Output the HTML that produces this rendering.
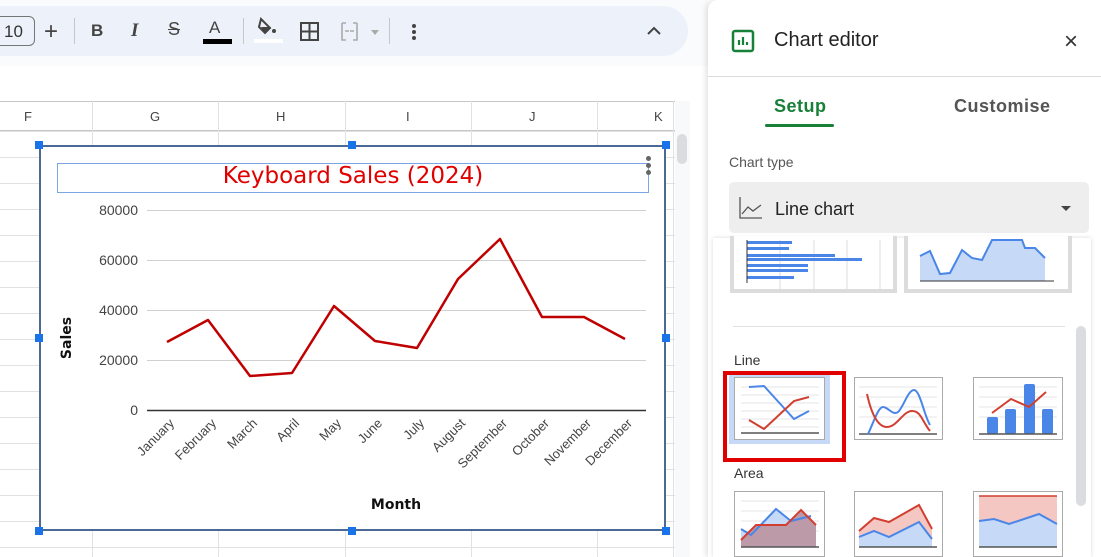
<!DOCTYPE html>
<html><head><meta charset="utf-8"><style>
*{margin:0;padding:0;box-sizing:border-box}
body{width:1101px;height:557px;overflow:hidden;background:#fff;font-family:"Liberation Sans",sans-serif;position:relative}
.a{position:absolute}
</style></head><body>
<div class="a" style="left:0;top:0;width:708px;height:66px;background:#f9fbfd"></div>
<div class="a" style="left:-30px;top:6px;width:718px;height:50px;background:#edf2fa;border-radius:25px"></div>
<div class="a" style="left:-10px;top:16px;width:45px;height:30px;border:1px solid #747775;border-radius:6px;font-size:17px;color:#333;padding:5px 0 0 13px">10</div>
<div class="a" style="left:44px;top:18px;font-size:24px;color:#444">+</div>
<div class="a" style="left:74px;top:18px;width:1px;height:26px;background:#c7c7c7"></div>
<div class="a" style="left:91px;top:21px;font-size:17px;font-weight:bold;color:#444">B</div>
<div class="a" style="left:131px;top:20px;font-size:19px;font-style:italic;font-family:'Liberation Serif',serif;font-weight:bold;color:#444">I</div>
<div class="a" style="left:168px;top:19px;font-size:18px;color:#444;text-decoration:line-through">S</div>
<div class="a" style="left:209px;top:18px;font-size:17px;color:#444">A</div>
<div class="a" style="left:203px;top:39px;width:29px;height:5px;background:#000"></div>
<div class="a" style="left:243px;top:18px;width:1px;height:26px;background:#c7c7c7"></div>
<svg class="a" style="left:256px;top:16px" width="22" height="22" viewBox="0 0 22 22"><path d="M5 3l9 9-5 5-6-6z" fill="none" stroke="#444" stroke-width="2"/><path d="M5 11h10l-6 6z" fill="#444"/><circle cx="18" cy="15" r="2" fill="#444"/></svg>
<div class="a" style="left:254px;top:39px;width:29px;height:4px;background:#fff"></div>
<svg class="a" style="left:300px;top:22px" width="20" height="20"><rect x="1" y="1" width="17" height="17" fill="none" stroke="#444" stroke-width="2"/><path d="M9.5 1v17M1 9.5h17" stroke="#444" stroke-width="2"/></svg>
<svg class="a" style="left:340px;top:22px" width="40" height="20"><path d="M2 1h4M2 1v17h4M17 1h-4M17 1v17h-4M5 9h4M14 9h-4" stroke="#aaa" stroke-width="1.6" fill="none"/><path d="M31 8l4 5 4-5z" fill="#aaa"/></svg>
<div class="a" style="left:389px;top:18px;width:1px;height:26px;background:#c7c7c7"></div>
<div class="a" style="left:412px;top:24px;width:4px;height:4px;background:#444;border-radius:50%;box-shadow:0 6px 0 #444,0 12px 0 #444"></div>
<svg class="a" style="left:646px;top:25px" width="16" height="12"><path d="M2 9l6-6 6 6" fill="none" stroke="#444" stroke-width="2"/></svg>
<div class="a" style="left:0;top:66px;width:690px;height:36px;background:#fff"></div>
<div class="a" style="left:0;top:101px;width:675px;height:456px;
background-image:linear-gradient(#e1e1e1 1px,transparent 1px);background-size:100% 26px;background-position:0 4px"></div>
<div class="a" style="left:0;top:101px;width:675px;height:30px;background:#fff;border-top:1px solid #c4c7c5;border-bottom:1px solid #c4c7c5"></div>
<div class="a" style="left:92px;top:101px;width:1px;height:456px;background:#e1e1e1"></div>
<div class="a" style="left:218px;top:101px;width:1px;height:456px;background:#e1e1e1"></div>
<div class="a" style="left:345px;top:101px;width:1px;height:456px;background:#e1e1e1"></div>
<div class="a" style="left:471px;top:101px;width:1px;height:456px;background:#e1e1e1"></div>
<div class="a" style="left:597px;top:101px;width:1px;height:456px;background:#e1e1e1"></div>
<div class="a" style="left:673px;top:101px;width:1px;height:456px;background:#e1e1e1"></div>
<div class="a" style="left:24px;top:109px;font-size:13px;color:#444">F</div>
<div class="a" style="left:150px;top:109px;font-size:13px;color:#444">G</div>
<div class="a" style="left:276px;top:109px;font-size:13px;color:#444">H</div>
<div class="a" style="left:406px;top:109px;font-size:13px;color:#444">I</div>
<div class="a" style="left:529px;top:109px;font-size:13px;color:#444">J</div>
<div class="a" style="left:654px;top:109px;font-size:13px;color:#444">K</div>
<div class="a" style="left:675px;top:101px;width:15px;height:456px;background:#f8f9fa"></div>
<div class="a" style="left:677px;top:134px;width:10px;height:30px;background:#dadce0;border-radius:5px"></div>
<div class="a" style="left:39px;top:145px;width:627px;height:386px;background:#fff;border:2px solid #4a6a94"></div>
<div class="a" style="left:57px;top:163px;width:592px;height:30px;border:1.5px solid #7aa6e6"></div>
<div class="a" style="left:57px;top:161px;width:592px;text-align:center;font-family:'Comic Sans MS','DejaVu Sans',sans-serif;font-size:23px;color:#e00000;line-height:30px">Keyboard Sales (2024)</div>
<div class="a" style="left:646px;top:156px;width:5px;height:5px;background:#666;border-radius:50%;box-shadow:0 7px 0 #666,0 14px 0 #666"></div>
<svg class="a" style="left:0;top:0" width="700" height="557">
<g stroke="#d0d0d0" stroke-width="1"><path d="M147 210.5H646M147 260.5H646M147 310.5H646M147 360.5H646"/></g>
<path d="M147 410.5H646" stroke="#333" stroke-width="1.5"/>
<g font-family="Liberation Sans" font-size="14" fill="#444" text-anchor="end">
<text x="138" y="215">80000</text><text x="138" y="265">60000</text><text x="138" y="315">40000</text><text x="138" y="365">20000</text><text x="138" y="415">0</text></g>
<polyline fill="none" stroke="#c00000" stroke-width="2.5" stroke-linejoin="round" points="167,342 208,320 250,376 292,373 334,306 375,341 417,348 458,279 500,239 542,317 584,317 625,339"/>
<g font-family="Liberation Sans" font-size="13" fill="#444" text-anchor="end">
<text transform="translate(175,424) rotate(-45)">January</text>
<text transform="translate(217,424) rotate(-45)">February</text>
<text transform="translate(258,424) rotate(-45)">March</text>
<text transform="translate(300,424) rotate(-45)">April</text>
<text transform="translate(342,424) rotate(-45)">May</text>
<text transform="translate(383,424) rotate(-45)">June</text>
<text transform="translate(425,424) rotate(-45)">July</text>
<text transform="translate(466,424) rotate(-45)">August</text>
<text transform="translate(508,424) rotate(-45)">September</text>
<text transform="translate(550,424) rotate(-45)">October</text>
<text transform="translate(592,424) rotate(-45)">November</text>
<text transform="translate(633,424) rotate(-45)">December</text></g>
<text x="396" y="509" text-anchor="middle" font-family="Comic Sans MS,DejaVu Sans" font-weight="bold" font-size="14" fill="#111">Month</text>
<text transform="translate(71,338) rotate(-90)" text-anchor="middle" font-family="Comic Sans MS,DejaVu Sans" font-weight="bold" font-size="14" fill="#111">Sales</text>
<g fill="#1a73e8"><rect x="35" y="141" width="8" height="8"/><rect x="348" y="141" width="8" height="8"/><rect x="662" y="141" width="8" height="8"/><rect x="35" y="334" width="8" height="8"/><rect x="662" y="334" width="8" height="8"/><rect x="35" y="527" width="8" height="8"/><rect x="348" y="527" width="8" height="8"/><rect x="662" y="527" width="8" height="8"/></g>
</svg>
<div class="a" style="left:708px;top:0;width:393px;height:557px;background:#fff;box-shadow:-2px 0 6px rgba(0,0,0,.12);border-top-left-radius:10px"></div>
<svg class="a" style="left:731px;top:29px" width="26" height="26"><rect x="2" y="2" width="20" height="20" rx="2" fill="none" stroke="#188038" stroke-width="2.5"/><path d="M8 16v-5M12 16V8M16 16v-3" stroke="#188038" stroke-width="2.2"/></svg>
<div class="a" style="left:774px;top:29px;font-size:20px;color:#222">Chart editor</div>
<div class="a" style="left:1064px;top:28px;font-size:24px;color:#333">×</div>
<div class="a" style="left:708px;top:76px;width:393px;height:1px;background:#dadce0"></div>
<div class="a" style="left:774px;top:96px;font-size:18px;color:#188038;font-weight:600;letter-spacing:.5px">Setup</div>
<div class="a" style="left:765px;top:124px;width:69px;height:3px;background:#188038;border-radius:2px"></div>
<div class="a" style="left:954px;top:96px;font-size:18px;color:#555;font-weight:600;letter-spacing:.5px">Customise</div>
<div class="a" style="left:729px;top:154px;font-size:14px;color:#555">Chart type</div>
<div class="a" style="left:729px;top:182px;width:360px;height:51px;background:#eeeeee;border-radius:5px"></div>
<svg class="a" style="left:739px;top:197px" width="24" height="22"><path d="M1 0v21h22M3 17l6-7 5 4 8-6" fill="none" stroke="#555" stroke-width="1.3"/></svg>
<div class="a" style="left:775px;top:199px;font-size:18px;color:#222">Line chart</div>
<div class="a" style="left:1061px;top:206px;width:0;height:0;border:5px solid transparent;border-top:5px solid #444"></div>
<div class="a" style="left:713px;top:238px;width:378px;height:319px;background:#fff;box-shadow:0 0 4px rgba(0,0,0,.15)"></div>
<div class="a" style="left:730px;top:236px;width:167px;height:57px;border:4px solid #dcdcdc;border-top:none;background:#fff"></div>
<svg class="a" style="left:730px;top:240px" width="167" height="52"><path d="M50 0v52M84 0v52M117 0v52M150 0v52" stroke="#ddd"/><g fill="#4a86e8"><rect x="17" y="1" width="45" height="3"/><rect x="17" y="7" width="42" height="3"/><rect x="17" y="14" width="88" height="3"/><rect x="17" y="18" width="115" height="3"/><rect x="17" y="24" width="61" height="3"/><rect x="17" y="29" width="61" height="3"/><rect x="17" y="36" width="47" height="3"/></g><path d="M17 0v43" stroke="#333"/></svg>
<div class="a" style="left:904px;top:236px;width:168px;height:57px;border:4px solid #dcdcdc;border-top:none;background:#fff"></div>
<svg class="a" style="left:908px;top:236px" width="160" height="53"><path d="M12 20l10-5 10 23 10 -1 12-23 10 8 10 2 10-20 30 0 3 8 10 0 10 10V45H12z" fill="#c6d9f6"/><path d="M12 20l10-5 10 23 10 -1 12-23 10 8 10 2 10-20 30 0 3 8 10 0 10 10" fill="none" stroke="#4a86e8" stroke-width="2"/><path d="M12 45h134" stroke="#333"/></svg>
<div class="a" style="left:733px;top:326px;width:332px;height:1px;background:#e0e0e0"></div>
<div class="a" style="left:1076px;top:326px;width:10px;height:180px;background:#dadce0;border-radius:5px"></div>
<div class="a" style="left:734px;top:352px;font-size:14px;color:#333">Line</div>
<div class="a" style="left:723px;top:371px;width:123px;height:91px;border:4px solid #e00000"></div>
<div class="a" style="left:729px;top:375px;width:101px;height:69px;background:#c6d9f6"></div>
<svg class="a" style="left:734px;top:377px" width="92" height="64"><rect x=".5" y=".5" width="90" height="62" fill="#fff" stroke="#aaa"/><path d="M7 10h78M7 18h78M7 26h78M7 34h78M7 42h78M7 50h78" stroke="#e4e4e4"/><path d="M7 56h78" stroke="#555" stroke-width="1.5"/><path d="M15 10l15-1 30 33 15-8" fill="none" stroke="#4a86e8" stroke-width="2"/><path d="M15 43l15 9 30-28 15-4" fill="none" stroke="#d23f31" stroke-width="2"/></svg>
<svg class="a" style="left:854px;top:377px" width="90" height="64"><rect x=".5" y=".5" width="88" height="62" fill="#fff" stroke="#aaa"/><path d="M5 10h78M5 20h78M5 30h78M5 40h78" stroke="#e4e4e4"/><path d="M5 57h78" stroke="#555" stroke-width="1.5"/><path d="M14 57c5-10 10-27 15-27s10 9 15 5 10-22 16-22 10 25 16 35" fill="none" stroke="#4a86e8" stroke-width="2"/><path d="M13 17c4 18 10 33 20 33s16-16 25-16 10 10 18 20" fill="none" stroke="#d23f31" stroke-width="2"/></svg>
<svg class="a" style="left:973px;top:377px" width="91" height="64"><rect x=".5" y=".5" width="89" height="62" fill="#fff" stroke="#aaa"/><path d="M6 10h78M6 20h78M6 30h78M6 40h78" stroke="#e4e4e4"/><g fill="#4a86e8"><rect x="14" y="40" width="11" height="17" rx="2"/><rect x="32" y="32" width="11" height="25" rx="2"/><rect x="51" y="7" width="11" height="50" rx="2"/><rect x="69" y="32" width="11" height="25" rx="2"/></g><path d="M6 57h78" stroke="#555" stroke-width="1.5"/><path d="M19 36l19-14 18 8 17-15" fill="none" stroke="#d23f31" stroke-width="2"/></svg>
<div class="a" style="left:734px;top:465px;font-size:14px;color:#333">Area</div>
<svg class="a" style="left:734px;top:491px" width="92" height="66"><rect x=".5" y=".5" width="90" height="65" fill="#fff" stroke="#aaa"/><path d="M7 10h78M7 20h78M7 30h78M7 40h78" stroke="#e4e4e4"/><path d="M7 38l10 6 25-26 15 12 20-5V56H7z" fill="#c6d9f6"/><path d="M7 49l15-15h30l15-15 15 15V56H7z" fill="#bc9aa8"/><path d="M7 38l10 6 25-26 15 12 20-5" fill="none" stroke="#4a86e8" stroke-width="2"/><path d="M7 49l15-15h30l15-15 15 15" fill="none" stroke="#d23f31" stroke-width="2"/><path d="M7 56h78" stroke="#555" stroke-width="1.5"/></svg>
<svg class="a" style="left:854px;top:491px" width="90" height="66"><rect x=".5" y=".5" width="88" height="65" fill="#fff" stroke="#aaa"/><path d="M5 40l15-13 15 4 30-17 13 24V56H5z" fill="#f4c7c3"/><path d="M5 46l15-6 15 6 30-15 13 17V56H5z" fill="#c6d9f6"/><path d="M5 40l15-13 15 4 30-17 13 24" fill="none" stroke="#d23f31" stroke-width="2"/><path d="M5 46l15-6 15 6 30-15 13 17" fill="none" stroke="#4a86e8" stroke-width="2"/><path d="M5 56h78" stroke="#555" stroke-width="1.5"/></svg>
<svg class="a" style="left:973px;top:491px" width="91" height="66"><rect x=".5" y=".5" width="89" height="65" fill="#fff" stroke="#aaa"/><rect x="6" y="5" width="78" height="51" fill="#f4c7c3"/><path d="M6 30l15-2 15 5 30-10 18 10V56H6z" fill="#c6d9f6"/><path d="M6 5h78" stroke="#d23f31" stroke-width="1.5"/><path d="M6 30l15-2 15 5 30-10 18 10" fill="none" stroke="#4a86e8" stroke-width="2"/><path d="M6 56h78" stroke="#555" stroke-width="1.5"/></svg>
</body></html>
